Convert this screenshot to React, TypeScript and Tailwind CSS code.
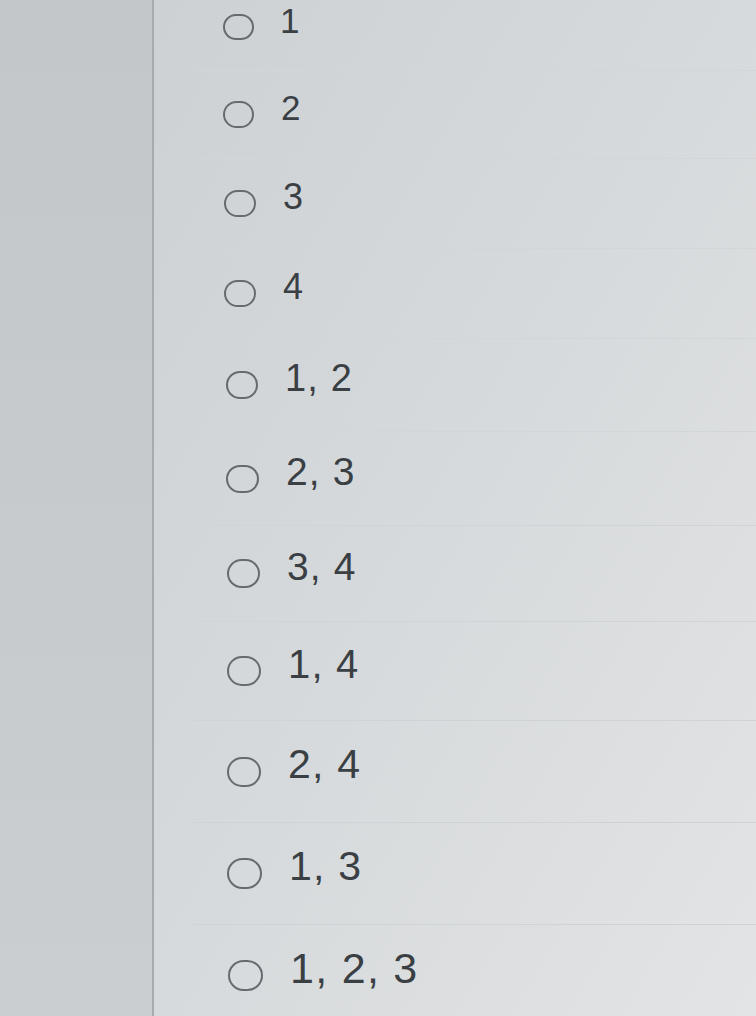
import React from "react";

type Row = {
  label: string;
  row: string;
  circle: string;
  text: string;
};

const rows: Row[] = [
  { label: "1", row: "h-[70px] pb-[16px] pl-[29px]", circle: "w-[31px] h-[26px]", text: "text-[35px] ml-[26px]" },
  { label: "2", row: "h-[88px] pl-[29px] border-t border-[#d3d6d8]", circle: "w-[31px] h-[27px]", text: "text-[35px] ml-[27px]" },
  { label: "3", row: "h-[90px] pl-[30px] border-t border-[#d3d6d8]", circle: "w-[32px] h-[27px]", text: "text-[36px] ml-[27px]" },
  { label: "4", row: "h-[90px] pl-[30px] border-t border-[#d3d6d8]", circle: "w-[32px] h-[27px]", text: "text-[36px] ml-[27px]" },
  { label: "1, 2", row: "h-[93px] pl-[32px] border-t border-[#d3d6d8]", circle: "w-[32px] h-[28px]", text: "text-[38px] ml-[27px]" },
  { label: "2, 3", row: "h-[94px] pl-[32px] border-t border-[#d3d6d8]", circle: "w-[33px] h-[28px]", text: "text-[39px] ml-[27px]" },
  { label: "3, 4", row: "h-[96px] pl-[33px] border-t border-[#d1d4d6]", circle: "w-[33px] h-[29px]", text: "text-[39px] ml-[27px]" },
  { label: "1, 4", row: "h-[99px] pl-[33px] border-t border-[#d1d4d6]", circle: "w-[34px] h-[30px]", text: "text-[40px] ml-[27px]" },
  { label: "2, 4", row: "h-[102px] pl-[33px] border-t border-[#d0d3d5]", circle: "w-[34px] h-[30px]", text: "text-[41px] ml-[27px]" },
  { label: "1, 3", row: "h-[102px] pl-[33px] border-t border-[#d0d3d5]", circle: "w-[35px] h-[31px]", text: "text-[41px] ml-[27px]" },
  { label: "1, 2, 3", row: "h-[102px] pl-[34px] border-t border-[#d0d3d5]", circle: "w-[35px] h-[31px]", text: "text-[43px] ml-[27px]" },
];

export default function App() {
  return (
    <div
      className="flex h-[1016px] w-[756px] overflow-hidden"
      style={{ fontFamily: '"Liberation Sans", Arial, sans-serif' }}
    >
      <div className="w-[152px] shrink-0 bg-linear-to-b from-[#c3c7ca] to-[#cbced0]" />
      <div className="w-[2px] shrink-0 bg-[#a6abae]" />
      <div className="flex-1 bg-linear-to-br from-[#cdd1d4] via-[#d7dadc] to-[#e2e4e5]">
        <div className="ml-[40px] flex flex-col">
          {rows.map((r) => (
            <div
              key={r.label}
              className={`flex shrink-0 items-center ${r.row}`}
            >
              <div
                className={`shrink-0 rounded-full border-2 border-[#676b6f] ${r.circle}`}
              />
              <span
                className={`mb-[14px] leading-none tracking-[0.03em] text-[#3a3f44] ${r.text}`}
              >
                {r.label}
              </span>
            </div>
          ))}
        </div>
      </div>
    </div>
  );
}
